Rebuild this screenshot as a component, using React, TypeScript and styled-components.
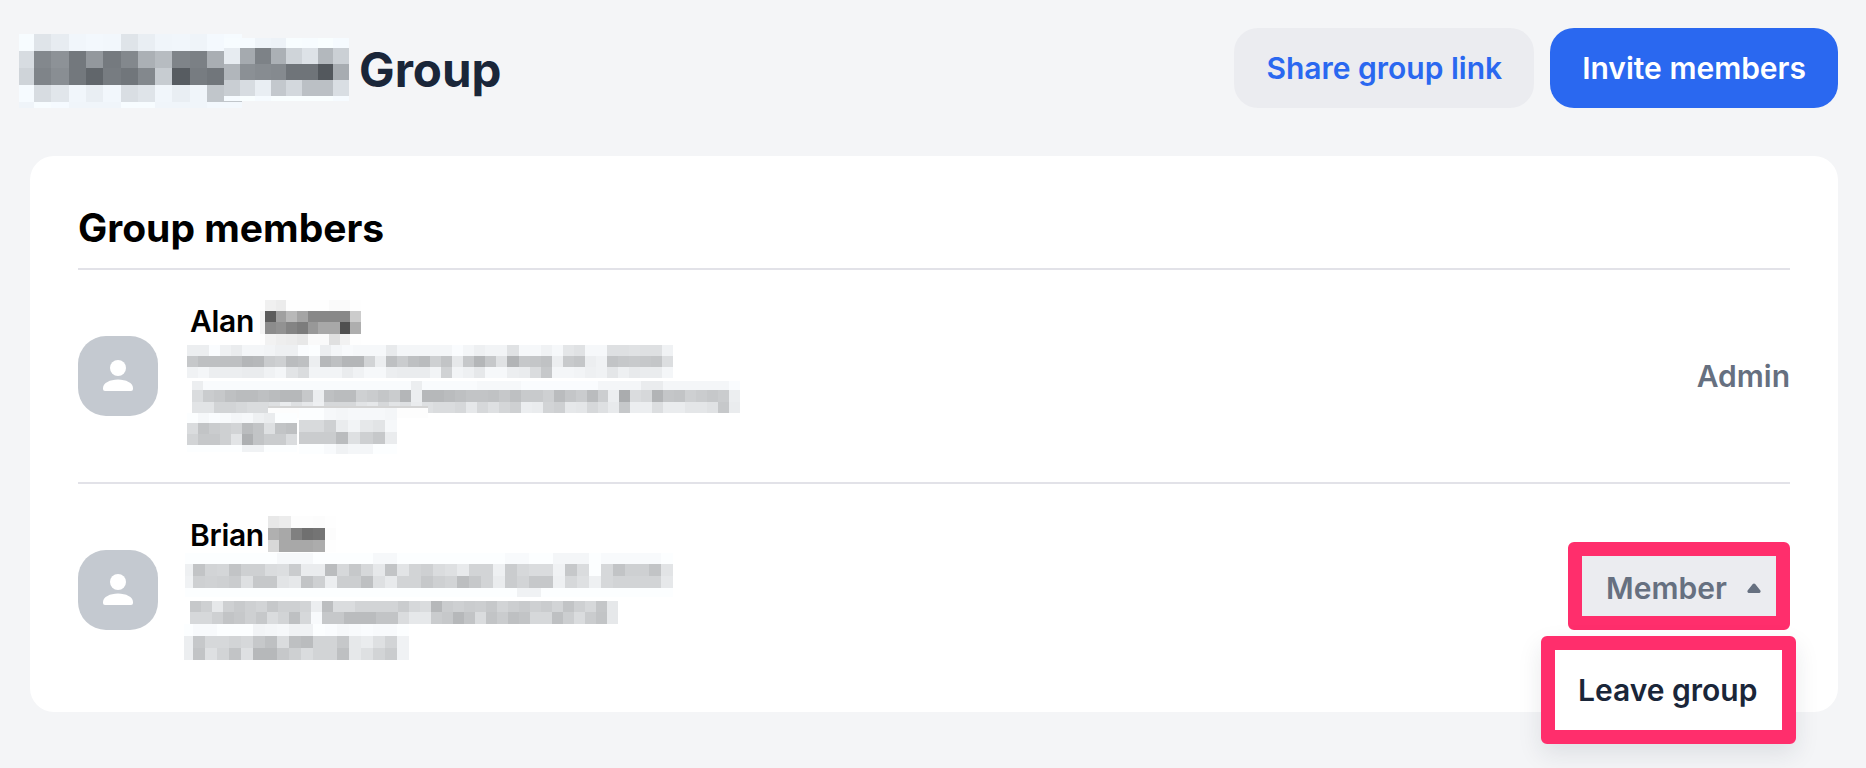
import React from 'react'
import styled, { createGlobalStyle } from 'styled-components'

const INK = '#1a2639'
const SLATE = '#667080'
const BLUE = '#2a68f0'
const PINK = '#ff2e6c'
const LINE = '#e2e2e8'

// A pixelated block: cells are grey levels, `tint` pushes them towards blue.
type Patch = {
    x: number
    y: number
    cw: number
    fw?: number
    heights: number[]
    rows: string[]
    tint?: number
}

const titlePatches: Patch[] = [
    {
        x: 19, y: 34, cw: 17.3, fw: 15, heights: [17, 17, 17, 17, 6], tint: 5,
        rows: [
            'fc e4 ec f6 f8 f7 e4 ee f5 f6 f4 f9 fb',
            'dc 88 92 78 98 7a 88 b0 bc 84 80 ae ae',
            'd4 84 8e 78 66 7c 76 88 cc 5c 7c 76 76',
            'fb dc e6 f6 ee f7 de e4 f6 ee f5 c6 c6',
            'f4 fc fa f5 f5 f5 fc fc f5 f5 f5 f8 f8',
        ],
    },
    {
        x: 224, y: 38, cw: 15.6, heights: [10, 16, 16, 16, 5], tint: 5,
        rows: [
            'fc fb f4 f2 fd fc fe fb',
            'ec aa 82 b0 d4 e2 b8 d0',
            'b6 90 8c 8a 74 74 58 ac',
            'ce dc ee c8 d8 c0 c0 de',
            'fb fe fb fe fe fe fe fb',
        ],
    },
]

const alanPatches: Patch[] = [
    {
        x: 187, y: 345, cw: 11.05, heights: [11, 11, 11], tint: 2,
        rows: [
            'ee ee fc f1 ec f6 f6 f4 f0 f0 fc fe ee f6 fa f8 f8 f8 ea f6 f6 f6 f6 f6 fc f6 f0 f4 f4 e2 f8 f8 f2 f8 e6 e2 f8 f8 e0 e0 e2 e0 e0 f2',
            'c8 c0 c0 c0 c0 b6 b8 cc d0 bc c0 ee b8 c0 b6 b6 d4 ee c0 cc c0 bc d0 c4 e8 c8 b6 c8 e2 b4 c8 c6 c2 ee ca c6 ee f2 c4 c8 ca c8 c6 de',
            'f2 f6 ee ee ee ec ec f2 f6 e4 dc f4 f4 f4 ec f2 f8 f8 ee ec ec ec f4 d2 f4 f0 e8 f8 f8 ee ec dc c8 f6 f6 f4 f0 f2 e6 f0 ea ec ec f6',
        ],
    },
    {
        x: 192, y: 381, cw: 10.96, heights: [8.5, 12, 11], tint: 2,
        rows: [
            'ee fb fb fb fb fb fb fb fb fb fb fb fb fb fb fb fb fb fb fb ee fb fb fb fb fb f8 f8 f8 f8 fc fc fc fc fc fc fc f6 f6 f6 f6 ec ec f6 f6 f6 f6 f6 f6 fc',
            'dc cc c8 c0 bc bc c0 bc b8 b8 c8 ee c0 bc bc d0 cc c6 cc b6 ee b8 b8 bc c0 c4 c4 c2 c8 c0 ca ca d0 bc c6 cc bc ce ee ac dc d8 b4 c6 c4 d0 cc c8 cc ee',
            'e4 e4 d4 d4 d8 dc dc e0 ec e0 e8 f0 d8 d8 d8 e4 e8 d8 e4 e0 ec e0 dc dc d8 e8 d8 e0 d6 d0 ee ec d4 d0 e8 e6 d8 e0 ea c8 ee ee de ec ec e6 e6 e2 c8 ec',
        ],
    },
    { x: 268, y: 406, cw: 160, heights: [1.5, 10], rows: ['d4', 'fd'] },
    {
        x: 187, y: 413, cw: 11, heights: [10, 10.5, 11.5, 7], tint: 2,
        rows: [
            'fe f8 fc fa f6 f8 f0 ec fe fe',
            'dc c4 cc d0 d4 bc c4 e0 c4 c0',
            'd4 c8 c8 d0 e4 b0 c4 cc cc dc',
            'fe fe fe fe fe f2 f2 fe fe fe',
        ],
    },
    {
        x: 299.3, y: 408, cw: 12.2, heights: [12, 12, 11.5, 10.5], tint: 2,
        rows: [
            'fe fe f8 f6 f8 f8 f8 f6',
            'da da d0 ec f4 e8 e4 f8',
            'cc cc cc bc e0 d0 c8 ec',
            'fe fe fa f2 f6 f6 fe fe',
        ],
    },
    {
        x: 260, y: 300, cw: 10.67, fw: 5, heights: [11, 11, 12, 11],
        rows: [
            'fe f0 ec fe fe fe fe fa fa fe',
            'f4 5c a0 b8 a4 88 88 88 88 cc',
            'f4 8c 92 84 7c 98 a8 a8 50 ae',
            'fe f2 ee ec e8 fa fa e0 f2 fe',
        ],
    },
]

const brianPatches: Patch[] = [
    {
        x: 185, y: 553, cw: 12, fw: 7.7, heights: [11, 12, 12, 9], tint: 2,
        rows: [
            'fe fe fe fe fe fe fe fe f8 f8 f8 fe fe fe fe fe f8 f8 fe fe fe fe fe fe fe fe fe fa fa fe fe f6 f6 f6 fe fa fa fa fa fa fe',
            'f0 c4 d4 d6 c4 d0 d0 dc de cc ec ec bc d8 c8 d8 e8 c4 e4 d4 d0 dc e0 ea d4 d4 f0 cc d8 dc dc f2 c8 dc fe d8 c4 d0 d0 c4 e4',
            'f2 d0 d2 d0 cc e0 c8 c8 e4 e8 c4 d0 ee ce ce c0 e0 ea d4 d4 c8 d0 d4 be c8 d4 ec cc d4 c8 c8 f0 d8 e0 f0 d8 d4 d4 d4 d4 e8',
            'fe fe fe fe fe fe fe fe fe fe fe fe fe fe fe fe fe fe fe fe fe fe fe fe fe fe fe fe f2 f2 fe fe fe fe fe fe fe fe fe fe fe',
        ],
    },
    {
        x: 190, y: 600.7, cw: 10.97, heights: [11.3, 12], tint: 2,
        rows: [
            'c8 d0 e8 d0 ca d0 d4 c8 d0 d0 d4 ee be dc dc d4 d4 d4 d4 cc d8 dc b8 cc d0 cc ce c8 d4 ce ca d0 cc d4 c4 d0 d8 c6 e8',
            'd8 d8 d0 c4 c8 d0 c8 dc d4 c0 d8 fa c8 c8 bc bc bc c4 c4 dc e8 e8 cc c8 b8 c4 dc c4 cc c0 c4 d8 d8 c0 ce dc cc c4 e8',
        ],
    },
    {
        x: 184, y: 624, cw: 12, fw: 8.7, heights: [12, 12, 12], tint: 2,
        rows: [
            'fe fa fa fe fe fe f4 f6 f8 f2 f2 fe fc f8 fa fc fa fa fe',
            'ee c8 d8 d8 d4 d8 c8 c0 dc c0 bc d4 d4 c8 e8 ec e0 d4 f2',
            'ee c4 e0 d4 c4 e0 b8 b8 c8 d0 dc d4 d4 c0 e8 e0 d4 cc f2',
        ],
    },
    {
        x: 268, y: 516, cw: 11.3, heights: [12, 12, 12],
        rows: [
            'e8 ec fd fd fc fe',
            'b0 a8 80 70 74 fc',
            'd8 a8 a8 a8 ac fe',
        ],
    },
]

const GlobalStyle = createGlobalStyle`
    html, body {
        margin: 0;
        background: #f4f5f7;
    }
    body {
        font-family: Inter, "Liberation Sans", sans-serif;
        -webkit-font-smoothing: antialiased;
    }
`

const Page = styled.div`
    box-sizing: border-box;
    height: 768px;
    padding: 28px 28px 0 30px;
    overflow: hidden;
`

const Header = styled.header`
    display: flex;
    align-items: center;
    height: 80px;
    margin: 0 0 48px -11px;
`

const Title = styled.h1`
    flex: 1;
    margin: 0 0 0 4px;
    padding-top: 3px;
    font-size: 47.5px;
    font-weight: 700;
    line-height: 77px;
    color: ${INK};
`

const HeaderActions = styled.div`
    display: flex;
    gap: 16px;
`

const ActionButton = styled.button<{ $primary?: boolean }>`
    height: 80px;
    padding: 0 32px;
    border: none;
    border-radius: 24px;
    font: 600 30px Inter, sans-serif;
    background: ${(p) => (p.$primary ? BLUE : '#ebecf0')};
    color: ${(p) => (p.$primary ? '#fff' : BLUE)};
`

const Card = styled.section`
    box-sizing: border-box;
    height: 556px;
    padding: 48px 48px 16px;
    border-radius: 24px;
    background: #fff;
`

const CardTitle = styled.h2`
    margin: 0;
    padding-bottom: 16px;
    border-bottom: 2px solid ${LINE};
    font-size: 39px;
    font-weight: 700;
    line-height: 48px;
    color: #000;
`

const Row = styled.div`
    display: flex;
    align-items: center;
    padding: 26px 0;

    & + & {
        border-top: 2px solid ${LINE};
    }
`

const Avatar = styled.div`
    flex: none;
    width: 80px;
    height: 80px;
    margin-right: 32px;
    border-radius: 28px;
    background: #c4c9d0;
`

const Info = styled.div`
    position: relative;
    flex: 1;
    height: 160px;
`

const Name = styled.div`
    padding-top: 7px;
    font-size: 30px;
    font-weight: 600;
    line-height: 36px;
    letter-spacing: -0.3px;
    color: #000;
`

const Redaction = styled.svg`
    position: absolute;
    top: 0;
    left: 0;
    width: 600px;
    height: 160px;
    overflow: visible;
`

const TitleRedaction = styled.svg`
    flex: none;
    width: 336px;
    height: 80px;
`

const Role = styled.span`
    font-size: 30px;
    font-weight: 600;
    color: ${SLATE};
`

const RoleMenu = styled.div`
    position: relative;
    margin-bottom: 8px;
`

const RoleTrigger = styled.button`
    box-sizing: border-box;
    display: flex;
    align-items: center;
    gap: 20px;
    width: 222px;
    height: 88px;
    padding: 4px 0 0 24px;
    border: 14px solid ${PINK};
    border-radius: 6px;
    background: #ebecf0;
    font: 600 30px Inter, sans-serif;
    color: ${SLATE};
`

const Dropdown = styled.div`
    position: absolute;
    top: calc(100% + 6px);
    right: -6px;
    box-sizing: border-box;
    display: flex;
    align-items: center;
    width: 255px;
    height: 108px;
    padding-left: 23px;
    border: 14px solid ${PINK};
    border-radius: 6px;
    background: #fff;
    box-shadow: 0 10px 24px rgba(26, 38, 57, 0.1);
    font-size: 30px;
    font-weight: 600;
    color: ${INK};
`

const Cells = ({ patches }: { patches: Patch[] }) => (
    <>
        {patches.map((p, i) => {
            let top = p.y
            return (
                <g key={i}>
                    {p.rows.map((row, r) => {
                        const h = p.heights[r]
                        const y = top
                        top += h
                        return row.split(' ').map((hex, c) => {
                            const v = parseInt(hex, 16)
                            const t = p.tint ?? 0
                            const first = p.fw ?? p.cw
                            const x = c === 0 ? p.x : p.x + first + (c - 1) * p.cw
                            const fill = `rgb(${v - t}, ${v}, ${Math.min(255, v + t)})`
                            return (
                                <rect
                                    key={`${r}-${c}`}
                                    x={x}
                                    y={y}
                                    width={c === 0 ? first : p.cw}
                                    height={h}
                                    fill={fill}
                                />
                            )
                        })
                    })}
                </g>
            )
        })}
    </>
)

const PersonIcon = () => (
    <svg width="80" height="80" viewBox="0 0 80 80" fill="#fff">
        <circle cx="40" cy="32" r="8" />
        <path d="M25 52c0-5 7-8.500 15-8.500s15 3.500 15 8.500v1a2 2 0 0 1-2 2H27a2 2 0 0 1-2-2z" />
    </svg>
)

const Caret = () => (
    <svg width="14" height="10" viewBox="0 0 14 10" fill={SLATE}>
        <path d="M5.800 1 .6 7.600C0 8.500.6 10 1.800 10h10.400c1.200 0 1.800-1.500 1.200-2.400L8.200 1c-.6-.8-1.800-.8-2.400 0z" />
    </svg>
)

export default function App() {
    return (
        <Page>
            <GlobalStyle />
            <Header>
                <TitleRedaction viewBox="19 28 336 80" shapeRendering="crispEdges">
                    <Cells patches={titlePatches} />
                </TitleRedaction>
                <Title>Group</Title>
                <HeaderActions>
                    <ActionButton>Share group link</ActionButton>
                    <ActionButton $primary>Invite members</ActionButton>
                </HeaderActions>
            </Header>
            <Card>
                <CardTitle>Group members</CardTitle>
                <Row>
                    <Avatar>
                        <PersonIcon />
                    </Avatar>
                    <Info>
                        <Name>Alan</Name>
                        <Redaction viewBox="190 296 600 160" shapeRendering="crispEdges">
                            <Cells patches={alanPatches} />
                        </Redaction>
                    </Info>
                    <Role>Admin</Role>
                </Row>
                <Row>
                    <Avatar>
                        <PersonIcon />
                    </Avatar>
                    <Info>
                        <Name>Brian</Name>
                        <Redaction viewBox="190 510 600 160" shapeRendering="crispEdges">
                            <Cells patches={brianPatches} />
                        </Redaction>
                    </Info>
                    <RoleMenu>
                        <RoleTrigger>
                            Member
                            <Caret />
                        </RoleTrigger>
                        <Dropdown>Leave group</Dropdown>
                    </RoleMenu>
                </Row>
            </Card>
        </Page>
    )
}
